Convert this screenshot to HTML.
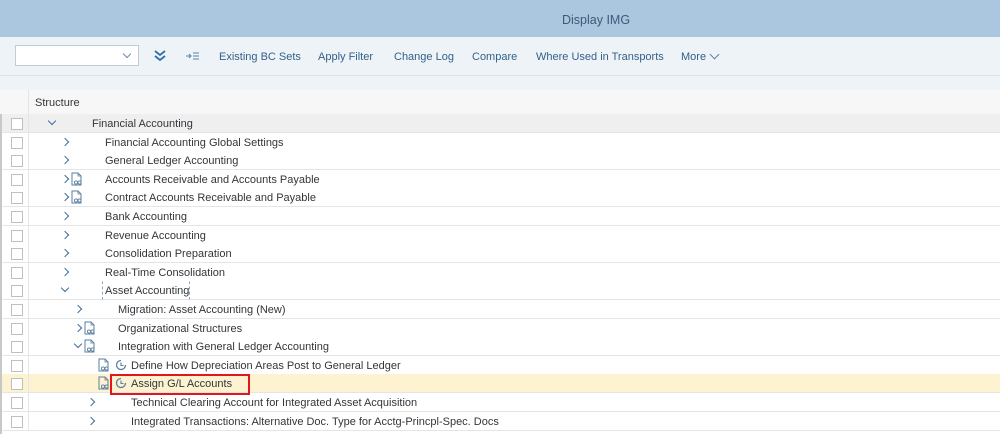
<!DOCTYPE html><html><head><style>
body{margin:0;width:1000px;height:434px;overflow:hidden;background:#fff;font-family:"Liberation Sans",Arial,sans-serif;position:relative}
.a{position:absolute}
.hdr{left:0;top:0;width:1000px;height:37px;background:#abc6df}
.tb{left:0;top:37px;width:1000px;height:38px;background:#eef3f8;border-bottom:1px solid #d8e2ec}
.tb2{left:0;top:76px;width:1000px;height:14px;background:#eef3f8}
.th{left:0;top:90px;width:1000px;height:24px;background:#f7f7f7}
.t{font-size:11px;color:#32363a;white-space:nowrap}
.tbt{font-size:11px;color:#346187;top:51px}
.row{left:0;width:1000px;height:18px;border-bottom:1px solid #e5e5e5}
.cb{position:absolute;left:11px;top:4px;width:10px;height:10px;border:1px solid #bfbfbf;background:#fff}
.vl{position:absolute;left:28px;top:0;width:1px;height:18px;background:#e5e5e5}
.chev{position:absolute;top:6px;width:5px;height:5px;border-right:1px solid #3f6e9a;border-bottom:1px solid #3f6e9a;transform:rotate(-45deg)}
.chd{transform:rotate(45deg);top:4px}
.doc{position:absolute;top:2px;width:13px;height:14px}
.clk{position:absolute;top:3px;width:12px;height:12px}
.lbl{position:absolute;top:4px;font-size:11px;color:#32363a;white-space:nowrap}
</style></head><body>
<div class="a hdr"></div>
<div class="a t" style="left:562px;top:13px;font-size:12.5px;color:#3b5a77">Display IMG</div>
<div class="a tb"></div><div class="a tb2"></div>
<div class="a" style="left:15px;top:45px;width:122px;height:19px;background:#fff;border:1px solid #c3ccd5"></div>
<div class="a" style="left:124px;top:51px;width:5px;height:5px;border-right:1px solid #6f8aa3;border-bottom:1px solid #6f8aa3;transform:rotate(45deg)"></div>
<svg class="a" style="left:153px;top:49px" width="14" height="14"><path d="M2 2l5 4 5-4M2 7l5 4 5-4" stroke="#2f6ea8" stroke-width="1.8" fill="none"/></svg>
<svg class="a" style="left:186px;top:51px" width="14" height="10"><path d="M0 5h5M3 3l2 2-2 2M7 2h6M7 5h6M7 8h6" stroke="#5b84a8" stroke-width="1" fill="none"/></svg>
<div class="a tbt" style="left:219px">Existing BC Sets</div>
<div class="a tbt" style="left:318px">Apply Filter</div>
<div class="a tbt" style="left:394px">Change Log</div>
<div class="a tbt" style="left:472px">Compare</div>
<div class="a tbt" style="left:536px">Where Used in Transports</div>
<div class="a tbt" style="left:681px">More</div>
<div class="a" style="left:711px;top:51px;width:6px;height:6px;border-right:1px solid #5b84a8;border-bottom:1px solid #5b84a8;transform:rotate(45deg)"></div>
<div class="a th"></div>
<div class="a" style="left:28px;top:90px;width:1px;height:24px;background:#e5e5e5"></div>
<div class="a t" style="left:35px;top:97px">Structure</div>
<div id="rows"></div>
<script>
var R=[[0,'Financial Accounting','d',0],[1,'Financial Accounting Global Settings','r',0],[1,'General Ledger Accounting','r',0],[1,'Accounts Receivable and Accounts Payable','r',1],[1,'Contract Accounts Receivable and Payable','r',1],[1,'Bank Accounting','r',0],[1,'Revenue Accounting','r',0],[1,'Consolidation Preparation','r',0],[1,'Real-Time Consolidation','r',0],[1,'Asset Accounting','d',0],[2,'Migration: Asset Accounting (New)','r',0],[2,'Organizational Structures','r',1],[2,'Integration with General Ledger Accounting','d',1],[3,'Define How Depreciation Areas Post to General Ledger','',2],[3,'Assign G/L Accounts','',2],[3,'Technical Clearing Account for Integrated Asset Acquisition','r',0],[3,'Integrated Transactions: Alternative Doc. Type for Acctg-Princpl-Spec. Docs','r',0]];
var D='<svg class="doc" style="left:LEFTpx" viewBox="0 0 13 14"><path d="M2 1h6l3 3v9H2z" fill="none" stroke="#5a7fa0"/><path d="M8 1v3h3" fill="none" stroke="#5a7fa0" stroke-width=".8"/><circle cx="6" cy="10.5" r="1.6" fill="none" stroke="#5a7fa0" stroke-width=".9"/><circle cx="9.5" cy="10.5" r="1.6" fill="none" stroke="#5a7fa0" stroke-width=".9"/></svg>';
var C='<svg class="clk" style="left:115px" viewBox="0 0 12 12"><path d="M10.5 6A4.5 4.5 0 1 1 6 1.5" fill="none" stroke="#5a7fa0" stroke-width="1.3"/><path d="M6 3.5V6.5h2.5" fill="none" stroke="#5a7fa0" stroke-width="1.1"/></svg>';
var h='';R.forEach(function(r,i){var top=114+i*18.6,l=r[0];var bg=i==0?'#efefef':(i==14?'#fdf3d0':'#fff');
var cx=49+13*l,tx=92+13*l;
h+='<div class="a row" style="top:'+top+'px;background:'+bg+'"><div class="cb"></div><div class="vl"></div>';
if(r[2])h+='<div class="chev'+(r[2]=='d'?' chd':'')+'" style="left:'+cx+'px"></div>';
if(r[3]==1)h+=D.replace('LEFT',cx+8);
if(r[3]==2){h+=D.replace('LEFT',97)+C;}
h+='<div class="lbl" style="left:'+tx+'px">'+r[1]+'</div>';
if(i==9)h+='<div style="position:absolute;left:102px;top:0;width:86px;height:17px;border:1px dashed #8aa6c0;border-top-color:transparent;border-bottom-color:transparent"></div>';
h+='</div>';});
document.getElementById('rows').innerHTML=h;
</script>
<div class="a" style="left:110px;top:374px;width:136px;height:17px;border:2px solid #e3161c"></div>
<div class="a" style="left:0;top:114px;width:2px;height:320px;background:#c8c8c8"></div>
</body></html>
